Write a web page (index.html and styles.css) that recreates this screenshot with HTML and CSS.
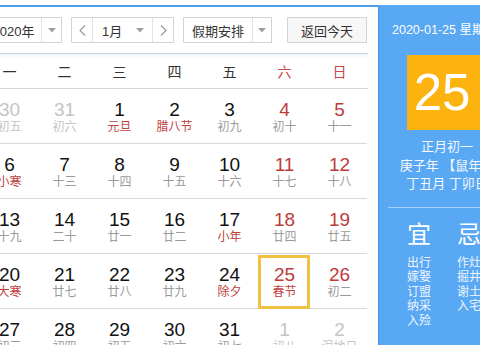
FILE: index.html
```html
<!DOCTYPE html>
<html lang="zh-CN">
<head>
<meta charset="utf-8">
<title>万年历</title>
<link rel="stylesheet" href="styles.css">
</head>
<body>
<div class="app">
  <div class="cal">
    <div class="toolbar">
      <div class="select year">
        <span class="sel-text">2020年</span>
        <span class="sel-arrow"><svg width="8" height="5" viewBox="0 0 8 5"><path d="M0 0h8L4 4.5z" fill="#a0a0a0"/></svg></span>
      </div>
      <div class="month">
        <span class="nav"><svg width="7" height="11" viewBox="0 0 7 11"><path d="M6 0.5L1 5.5l5 5" fill="none" stroke="#9a9a9a" stroke-width="1.2"/></svg></span>
        <span class="month-mid">
          <span class="month-text">1月</span>
          <svg width="8" height="5" viewBox="0 0 8 5"><path d="M0 0h8L4 4.5z" fill="#a0a0a0"/></svg>
        </span>
        <span class="nav right"><svg width="7" height="11" viewBox="0 0 7 11"><path d="M1 0.5l5 5-5 5" fill="none" stroke="#9a9a9a" stroke-width="1.2"/></svg></span>
      </div>
      <div class="select holiday">
        <span class="sel-text">假期安排</span>
        <span class="sel-arrow"><svg width="8" height="5" viewBox="0 0 8 5"><path d="M0 0h8L4 4.5z" fill="#a0a0a0"/></svg></span>
      </div>
      <div class="btn">返回今天</div>
    </div>
    <div class="weekdays">
      <span>一</span><span>二</span><span>三</span><span>四</span><span>五</span><span class="we">六</span><span class="we">日</span>
    </div>
    <div class="grid">
      <div class="cell other"><b>30</b><i>初五</i></div>
      <div class="cell other"><b>31</b><i>初六</i></div>
      <div class="cell"><b>1</b><i class="fest">元旦</i></div>
      <div class="cell"><b>2</b><i class="fest">腊八节</i></div>
      <div class="cell"><b>3</b><i>初九</i></div>
      <div class="cell we"><b>4</b><i>初十</i></div>
      <div class="cell we"><b>5</b><i>十一</i></div>

      <div class="cell"><b>6</b><i class="fest">小寒</i></div>
      <div class="cell"><b>7</b><i>十三</i></div>
      <div class="cell"><b>8</b><i>十四</i></div>
      <div class="cell"><b>9</b><i>十五</i></div>
      <div class="cell"><b>10</b><i>十六</i></div>
      <div class="cell we"><b>11</b><i>十七</i></div>
      <div class="cell we"><b>12</b><i>十八</i></div>

      <div class="cell"><b>13</b><i>十九</i></div>
      <div class="cell"><b>14</b><i>二十</i></div>
      <div class="cell"><b>15</b><i>廿一</i></div>
      <div class="cell"><b>16</b><i>廿二</i></div>
      <div class="cell"><b>17</b><i class="fest">小年</i></div>
      <div class="cell we"><b>18</b><i>廿四</i></div>
      <div class="cell we"><b>19</b><i>廿五</i></div>

      <div class="cell"><b>20</b><i class="fest">大寒</i></div>
      <div class="cell"><b>21</b><i>廿七</i></div>
      <div class="cell"><b>22</b><i>廿八</i></div>
      <div class="cell"><b>23</b><i>廿九</i></div>
      <div class="cell"><b>24</b><i class="fest">除夕</i></div>
      <div class="cell we today"><b>25</b><i class="fest">春节</i></div>
      <div class="cell we"><b>26</b><i>初二</i></div>

      <div class="cell"><b>27</b><i>初三</i></div>
      <div class="cell"><b>28</b><i>初四</i></div>
      <div class="cell"><b>29</b><i>初五</i></div>
      <div class="cell"><b>30</b><i>初六</i></div>
      <div class="cell"><b>31</b><i>初七</i></div>
      <div class="cell other"><b>1</b><i>初八</i></div>
      <div class="cell other"><b>2</b><i>湿地日</i></div>
    </div>
  </div>
  <div class="panel">
    <div class="p-date">2020-01-25 星期六</div>
    <div class="p-day">25</div>
    <div class="p-lunar">
      <div>正月初一</div>
      <div>庚子年 【鼠年】</div>
      <div>丁丑月 丁卯日</div>
    </div>
    <div class="p-sep"></div>
    <div class="p-yiji">
      <div class="col">
        <div class="big">宜</div>
        <div class="items"><div>出行</div><div>嫁娶</div><div>订盟</div><div>纳采</div><div>入殓</div></div>
      </div>
      <div class="col">
        <div class="big">忌</div>
        <div class="items"><div>作灶</div><div>掘井</div><div>谢土</div><div>入宅</div></div>
      </div>
    </div>
  </div>
</div>
</body>
</html>
```

FILE: styles.css
```css
* { box-sizing: border-box; }
html, body { margin: 0; padding: 0; background: #fff; overflow: hidden; }
body {
  padding-top: 5px;
  font-family: "Liberation Sans", "Noto Sans CJK SC", sans-serif;
  color: #333;
}
.app {
  display: flex;
  margin-left: -28px;
  width: 700px;
}
.cal {
  flex: 0 0 406px;
  border-top: 2px solid #4d9de8;
  padding: 0 10px;
}
.toolbar {
  display: flex;
  align-items: stretch;
  margin-top: 10px;
  padding-bottom: 10px;
  border-bottom: 1px solid #c6d2de;
  box-sizing: content-box;
  height: 26px;
  font-size: 13px;
}
.select {
  display: flex;
  border: 1px solid #d4d4d4;
  background: #fff;
  height: 26px;
}
.sel-text {
  flex: 1;
  display: flex;
  align-items: center;
  justify-content: center;
  color: #333;
}
.sel-arrow {
  flex: 0 0 20px;
  display: flex;
  align-items: center;
  justify-content: center;
  border-left: 1px solid #e2e2e2;
}
.year { width: 80px; }
.year .sel-text { padding-left: 3px; }
.holiday { width: 89px; margin-left: 9px; }
.holiday .sel-arrow { flex-basis: 19px; }
.month {
  display: flex;
  width: 103px;
  margin-left: 9px;
  border: 1px solid #d4d4d4;
  height: 26px;
}
.nav {
  flex: 0 0 21px;
  display: flex;
  align-items: center;
  justify-content: center;
  border-right: 1px solid #e2e2e2;
}
.nav.right { border-right: 0; border-left: 1px solid #e2e2e2; }
.month-mid {
  flex: 1;
  display: flex;
  align-items: center;
  padding-left: 9px;
  gap: 14px;
}
.btn {
  margin-left: 15px;
  width: 80px;
  height: 26px;
  border: 1px solid #d4d4d4;
  background: #f7f7f7;
  display: flex;
  align-items: center;
  justify-content: center;
  color: #333;
}
.weekdays {
  display: grid;
  grid-template-columns: repeat(7, 55px);
  height: 35px;
  border-bottom: 1px solid #d6d6d6;
  background: linear-gradient(#f3f8fd, #fff 6px);
  font-size: 14px;
  align-items: center;
  text-align: center;
  color: #333;
}
.weekdays .we { color: #c44a4a; }
.grid {
  display: grid;
  grid-template-columns: repeat(7, 55px);
  grid-auto-rows: 55px;
}
.cell {
  position: relative;
  border-bottom: 1px solid #d8d8d8;
  display: flex;
  flex-direction: column;
  align-items: center;
  padding-top: 11px;
}
.cell b {
  font-weight: normal;
  font-size: 19px;
  line-height: 20px;
  color: #111;
}
.cell i {
  font-style: normal;
  font-size: 12px;
  line-height: 14px;
  color: #9a9a9a;
}
.cell.we b { color: #bd3b3b; }
.cell i.fest { color: #c0403c; }
.cell.other b { color: #c4c4c4; }
.cell.other i { color: #c4c4c4; }
.cell.today::before {
  content: "";
  position: absolute;
  top: 1px;
  left: 1px;
  right: 2px;
  bottom: -1px;
  border: 3px solid #f1c141;
}
.panel {
  flex: 0 0 140px;
  background: #58a8f3;
  border-left: 1px solid #4a92e0;
  color: #fff;
  padding-top: 16px;
  display: flex;
  flex-direction: column;
}
.p-date {
  font-size: 12.5px;
  line-height: 18px;
  padding-left: 13px;
  white-space: nowrap;
}
.p-day {
  margin: 16px 0 0 28px;
  width: 76px;
  height: 75px;
  background: #fcb20f;
  font-size: 51px;
  line-height: 75px;
  text-align: center;
  color: #fff;
  padding-right: 6px;
}
.p-lunar {
  margin-top: 8px;
  width: 136px;
  text-align: center;
  font-size: 13px;
  line-height: 18.5px;
  white-space: nowrap;
  color: #f4f9ff;
}
.p-sep {
  margin: 13px 0 0 9px;
  height: 1px;
  background: rgba(255,255,255,0.45);
}
.p-yiji {
  display: flex;
  padding-left: 28px;
  margin-top: 13px;
}
.col { flex: 0 0 50px; }
.big {
  font-size: 24px;
  line-height: 28px;
}
.items {
  margin-top: 7px;
  font-size: 12px;
  line-height: 14.5px;
  color: #eef5ff;
  white-space: nowrap;
}
```
